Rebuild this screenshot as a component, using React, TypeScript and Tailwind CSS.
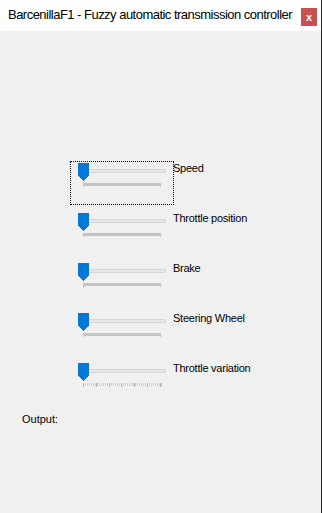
const sliders = [
    { label: 'Speed', focused: true, ticks: 'line' },
    { label: 'Throttle position', focused: false, ticks: 'line' },
    { label: 'Brake', focused: false, ticks: 'line' },
    { label: 'Steering Wheel', focused: false, ticks: 'line' },
    { label: 'Throttle variation', focused: false, ticks: 'dense' },
]

function TrackBar({ dense }: { dense: boolean }) {
    const minor: number[] = []
    for (let x = 13; x <= 91; x += 2) minor.push(x)
    const major = [0, 1, 2, 3, 4, 5, 6].map(i => Math.round(13 + i * 12.83))
    return (
        <svg width="104" height="44" viewBox="0 0 104 44" shapeRendering="crispEdges">
            <rect x="13.5" y="8.5" width="82" height="3" fill="#e7e7e7" stroke="#d6d6d6" />
            {dense ? (
                <g>
                    {minor.map(x => (
                        <rect key={x} x={x} y="22" width="1" height="3" fill="#cfcfcf" />
                    ))}
                    {major.map(x => (
                        <rect key={'m' + x} x={x} y="22" width="1" height="4" fill="#b4b4b4" />
                    ))}
                </g>
            ) : (
                <g>
                    <rect x="13" y="22" width="78" height="3" fill="#c4c4c4" />
                    <rect x="13" y="22" width="1" height="4" fill="#c4c4c4" />
                    <rect x="90" y="22" width="1" height="4" fill="#c4c4c4" />
                </g>
            )}
            <polygon points="8,2 19,2 19,14 13.5,20 8,14" fill="#0078d7" />
        </svg>
    )
}

export default function App() {
    return (
        <div
            className="w-[322px] h-[513px] flex flex-col bg-[#f0f0f0] border-r border-[#2b2b2b] text-black"
            style={{ fontFamily: '"Liberation Sans", Arial, sans-serif' }}
        >
            <div className="h-[31px] bg-white flex items-center justify-between pl-2 pr-[4px] shrink-0">
                <span className="text-[13px] leading-none tracking-[-0.52px] whitespace-nowrap mt-[-2px]">
                    BarcenillaF1 - Fuzzy automatic transmission controller
                </span>
                <div className="w-[16px] h-[18px] bg-[#c75050] text-white text-[11px] font-bold flex items-center justify-center leading-none mt-[3px] shrink-0">
                    x
                </div>
            </div>
            <div className="flex flex-col pt-[130px] pl-[70px]">
                {sliders.map(s => (
                    <div key={s.label} className="flex h-[50px]">
                        <div
                            className={
                                s.focused
                                    ? 'w-[104px] h-[44px] border border-dotted border-black box-border'
                                    : 'w-[104px] h-[44px] border border-transparent box-border'
                            }
                        >
                            <div className="-m-px">
                                <TrackBar dense={s.ticks === 'dense'} />
                            </div>
                        </div>
                        <span className="text-[11px] leading-none tracking-[-0.25px] pt-[2px] -ml-px">{s.label}</span>
                    </div>
                ))}
            </div>
            <div className="pl-[22px] pt-[3px] text-[11px] leading-none">Output:</div>
        </div>
    )
}
